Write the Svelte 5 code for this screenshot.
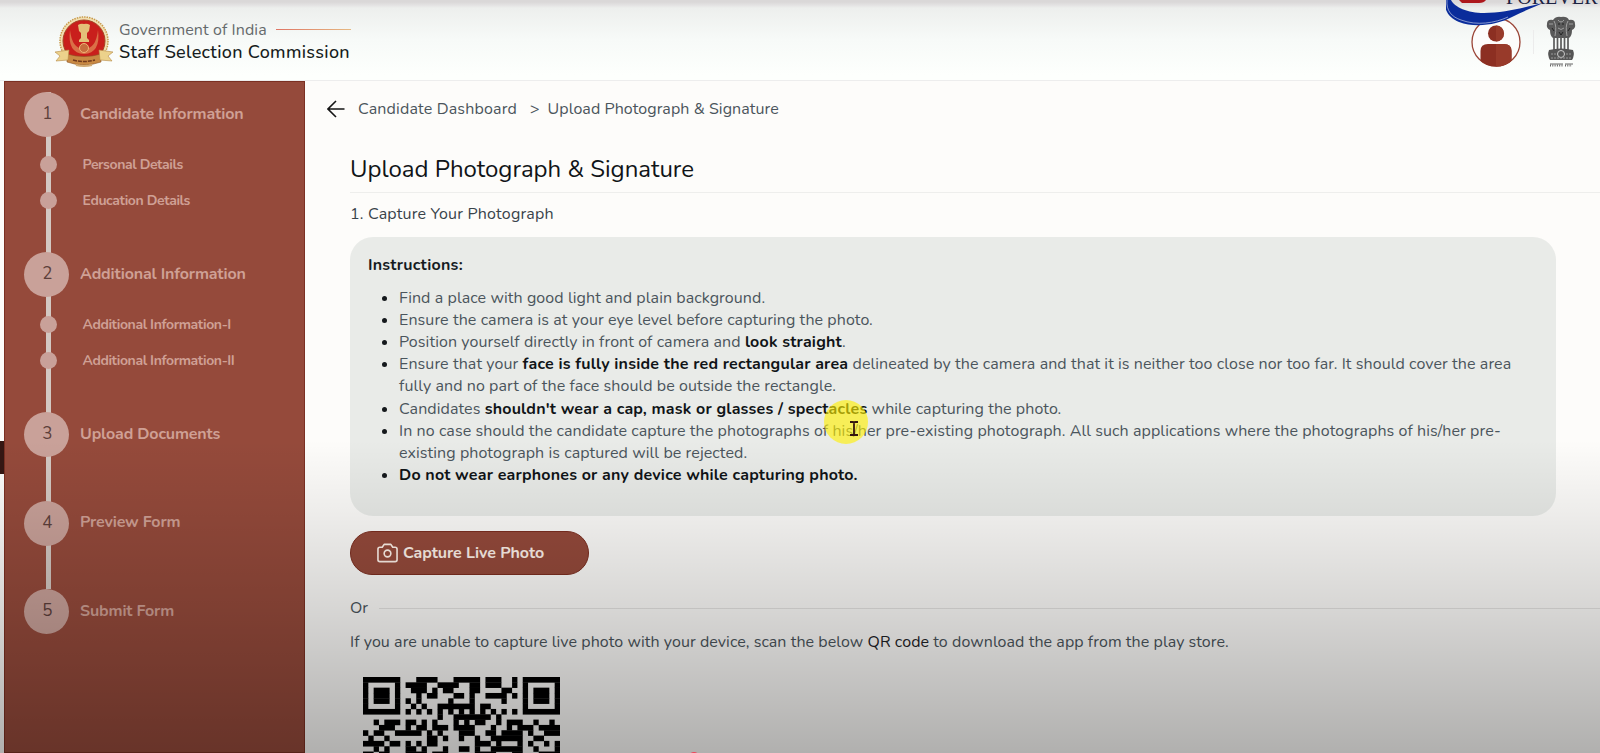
<script lang="ts">
  interface Step {
    label: string;
    children: string[];
  }

  const steps: Step[] = [
    { label: 'Candidate Information', children: ['Personal Details', 'Education Details'] },
    { label: 'Additional Information', children: ['Additional Information-I', 'Additional Information-II'] },
    { label: 'Upload Documents', children: [] },
    { label: 'Preview Form', children: [] },
    { label: 'Submit Form', children: [] }
  ];

  // dark modules of the code, as [first column, last column] runs per row
  const qrRows: number[][][] = [
    [[0, 6], [10, 13], [17, 21], [23, 25], [28, 28], [30, 36]],
    [[0, 0], [6, 6], [8, 11], [14, 17], [20, 21], [23, 25], [28, 28], [30, 30], [36, 36]],
    [[0, 0], [2, 4], [6, 6], [9, 11], [13, 13], [15, 16], [20, 21], [26, 27], [30, 30], [32, 34], [36, 36]],
    [[0, 0], [2, 4], [6, 6], [10, 10], [12, 13], [17, 18], [20, 20], [23, 26], [28, 28], [30, 30], [32, 34], [36, 36]],
    [[0, 0], [2, 4], [6, 6], [8, 8], [10, 10], [16, 16], [20, 20], [26, 26], [30, 30], [32, 34], [36, 36]],
    [[0, 0], [6, 6], [9, 9], [11, 11], [14, 20], [22, 23], [30, 30], [36, 36]],
    [[0, 6], [8, 8], [10, 10], [12, 12], [14, 14], [16, 16], [18, 18], [20, 20], [22, 22], [24, 24], [26, 26], [28, 28], [30, 36]],
    [[14, 14], [17, 23], [25, 25]],
    [[2, 2], [4, 6], [8, 9], [11, 11], [13, 13], [17, 17], [19, 19], [21, 22], [25, 25], [27, 29], [32, 32], [35, 35]],
    [[3, 5], [8, 8], [10, 11], [13, 15], [17, 20], [24, 24], [27, 27], [29, 31], [33, 36]],
    [[0, 0], [2, 3], [6, 10], [12, 12], [14, 14], [18, 20], [23, 24], [26, 29], [31, 31], [34, 36]],
    [[1, 1], [4, 4], [12, 13], [15, 15], [18, 18], [21, 21], [24, 29], [32, 33]],
    [[0, 3], [5, 6], [8, 8], [10, 10], [12, 13], [21, 23], [25, 25], [29, 29], [31, 31], [34, 34], [36, 36]],
    [[2, 2], [4, 4], [8, 9], [11, 11], [15, 15], [18, 19], [21, 21], [24, 29], [32, 32], [36, 36]],
    [[0, 1], [3, 4], [8, 11], [13, 15], [21, 24], [28, 29], [33, 36]]
  ];
</script>

<div class="page">
  <header>
    <svg class="crest" width="58" height="52" viewBox="0 0 58 52">
      <circle cx="29" cy="25" r="24" fill="#f1dfb0" stroke="#c89a4b" stroke-width="1.5" stroke-dasharray="1.5 1" />
      <circle cx="29" cy="25" r="21" fill="#c91f1c" stroke="#a54222" />
      <path d="M15 14 Q12 37 29 38 Q46 37 43 14 Q41 33 29 33 Q17 33 15 14Z" fill="#da7047" />
      <path d="M23 9 q3-2 6-1 q3-1 6 1 l-1 6 -2 2 v5 l2 2 v2 h-10 v-2 l2-2 v-5 l-2-2Z" fill="#e4c078" />
      <circle cx="29" cy="32" r="4.5" fill="#c76d3d" stroke="#edb776" />
      <path d="M12 38 Q29 43 46 38 V46 Q29 52 12 46Z" fill="#c88943" stroke="#8c5425" stroke-width=".6" />
      <path d="M14 34 L0 36 L5 40 L1 45 L13 44Z M44 34 L58 36 L53 40 L57 45 L45 44Z" fill="#ecd28b" stroke="#b58a46" stroke-width=".6" />
      <path d="M18 44 Q29 47 40 44" fill="none" stroke="#703a1c" stroke-width="1.5" stroke-dasharray="4 1" />
      <path d="M21 49 Q29 51 37 49" fill="none" stroke="#d2ac75" stroke-width="2" />
    </svg>
    <div class="brand">
      <div class="gov"><span>Government of India</span><i></i></div>
      <div class="ssc">Staff Selection Commission</div>
    </div>
    <div class="account">
      <svg width="50" height="50" viewBox="0 0 50 50">
        <defs>
          <clipPath id="avatar"><circle cx="25" cy="25" r="24.5" /></clipPath>
        </defs>
        <circle cx="25" cy="25" r="24" fill="#fdfcfb" stroke="#9b4537" stroke-width="1.3" />
        <g clip-path="url(#avatar)">
          <circle cx="25" cy="16.500" r="8" fill="#8c2f22" />
          <path d="M9.500 50 V34 Q9.500 27 17 27 H33 Q40.500 27 40.500 34 V50Z" fill="#8c2f22" />
          <path d="M25 8.500 a8 8 0 0 1 0 16Z M25 27 H33 Q40.500 27 40.500 34 V50 H25Z" fill="#983a2a" />
        </g>
      </svg>
      <span class="divider"></span>
      <svg width="30" height="52" viewBox="0 0 30 52">
        <path d="M7 4 Q10 0 15 1 Q21 0 23 4 Q29 3 29 8 Q30 12 26 14 Q26 20 23 22 H7 Q4 20 4 14 Q0 12 1 8 Q1 3 7 4Z" fill="#595959" />
        <path d="M8 5 Q11 10 9 20 M22 5 Q19 10 21 20 M12 4 Q15 8 18 4 M12 12 q3 3 6 0 M3 8 h4 M23 8 h4" fill="none" stroke="#a0a0a0" stroke-width="1" />
        <path d="M12 8 h2 M16 8 h2 M13 16 l2 3 2-3 M6 12 l2 3 M24 12 l-2 3" fill="none" stroke="#222" stroke-width="1" />
        <path d="M8 21 V34 M11.500 20 V34 M15 21 V34 M18.500 20 V34 M22 21 V34" stroke="#5b5b5b" stroke-width="1.700" />
        <path d="M3 34 Q15 31 27 34 Q29 39 26 44 H4 Q1 39 3 34Z" fill="#555" />
        <circle cx="15" cy="38" r="3.500" fill="none" stroke="#ccc" />
        <path d="M5 38 h5 M20 38 h5 M5 42 h20" stroke="#999" stroke-dasharray="2 1" />
        <path d="M4 48 H17 M19 48 H27" stroke="#666" stroke-width="1" />
        <path d="M4 49.500 H17 M19 49.500 H26" stroke="#666" stroke-width="2" stroke-dasharray="1 1.300" />
      </svg>
    </div>
  </header>

  <div class="body">
    <nav>
      {#each steps as step, i}
        <div class="step" class:has-children={step.children.length > 0}>
          <div class="step-head">
            <span class="number">{i + 1}</span>
            <span class="title">{step.label}</span>
          </div>
          {#if step.children.length > 0}
            <ul class="substeps">
              {#each step.children as child}
                <li><span class="dot"></span>{child}</li>
              {/each}
            </ul>
          {/if}
        </div>
      {/each}
    </nav>

    <main>
      <div class="breadcrumb">
        <svg width="18" height="18" viewBox="0 0 18 18">
          <path d="M17.500 9 H1.500 M9 1 L1 9 L9 17" fill="none" stroke="#151515" stroke-width="1.6" />
        </svg>
        <span class="crumb first">Candidate Dashboard</span>
        <span class="sep">&gt;</span>
        <span class="crumb">Upload Photograph &amp; Signature</span>
      </div>

      <section>
        <h1>Upload Photograph &amp; Signature</h1>
        <h2>1. Capture Your Photograph</h2>

        <div class="instructions">
          <h3>Instructions:</h3>
          <ul>
            <li>Find a place with good light and plain background.</li>
            <li>Ensure the camera is at your eye level before capturing the photo.</li>
            <li>Position yourself directly in front of camera and <b>look straight</b>.</li>
            <li>Ensure that your <b>face is fully inside the red rectangular area</b> delineated by the camera and that it is neither too close nor too far. It should cover the area<br />fully and no part of the face should be outside the rectangle.</li>
            <li>Candidates <b>shouldn't wear a cap, mask or glasses / spectacles</b> while capturing the photo.</li>
            <li>In no case should the candidate capture the photographs of his/her pre-existing photograph. All such applications where the photographs of his/her pre-<br />existing photograph is captured will be rejected.</li>
            <li><b>Do not wear earphones or any device while capturing photo.</b></li>
          </ul>
        </div>

        <button type="button">
          <svg width="21" height="20" viewBox="0 0 22 20">
            <path d="M3 4 H5.500 L7.500 1 H14.500 L16.500 4 H19 Q21 4 21 6 V17 Q21 19 19 19 H3 Q1 19 1 17 V6 Q1 4 3 4Z" fill="none" stroke="currentColor" stroke-width="1.7" stroke-linejoin="round" />
            <circle cx="11" cy="10.500" r="3.500" fill="none" stroke="currentColor" stroke-width="1.7" />
          </svg>
          <span>Capture Live Photo</span>
        </button>

        <div class="or"><span>Or</span><i></i></div>
        <p class="scan">If you are unable to capture live photo with your device, scan the below <em>QR code</em> to download the app from the play store.</p>

        <svg class="qr" width="197" height="197" viewBox="0 0 37 37">
          {#each qrRows as runs, y}
            {#each runs as [from, to]}
              <rect x={from} {y} width={to - from + 1} height="1.06" />
            {/each}
          {/each}
        </svg>
      </section>
    </main>
  </div>

  <div class="edge-tab"></div>
  <div class="shade"></div>
  <div class="red-dot"></div>

  <div class="pointer">
    <svg width="44" height="44" viewBox="0 0 44 44">
      <circle cx="22" cy="22" r="22" fill="#fff000" fill-opacity=".62" />
      <path d="M26 22 h3 l1 1 1-1 h3 M26 35 h3 l1-1 1 1 h3 M30 22.500 V35" fill="none" stroke="#35160f" stroke-width="1.800" />
    </svg>
  </div>

  <div class="watermark">
    <svg width="154" height="28" viewBox="0 0 154 28">
      <path d="M-1 0 C-2 12 4 18 13 22 C29 28 51 25 66 17 C78 11 88 7 97 3 C80 7 58 13 38 13 C22 13 8 7 5 0Z" fill="#0a2c9b" />
      <path d="M1 0 C0 11 6 17 15 20 C31 26 49 23 62 17" fill="none" stroke="#d9def0" stroke-width=".6" />
      <path d="M13 0 H40 Q38 3 33 3 H16Z" fill="#ad171c" />
    </svg>
    <span>FOREVER</span>
  </div>
</div>

<style>
  :global(body) {
    overflow: hidden;
  }

  .page {
    position: relative;
    width: 1600px;
    height: 753px;
    overflow: hidden;
    box-sizing: border-box;
    padding: 4px 0 0 4px;
    background: #fdfcfa;
    color: #4b555c;
    font-family: Nunito, 'Open Sans', 'Noto Sans', sans-serif;
    font-size: 16px;
    letter-spacing: 0.06px;
  }

  .page::before {
    content: '';
    position: absolute;
    inset: 0 0 auto 0;
    height: 81px;
    background: linear-gradient(#dad8d8 0 2px, #e3e2e2 5px, #edefed 8px, #f7faf8 40px, #fdfffd 75px);
    border-bottom: 1px solid #ededed;
    box-sizing: border-box;
  }

  header {
    position: relative;
    height: 77px;
    box-sizing: border-box;
    padding: 12px 24px 0 51px;
    display: flex;
    align-items: flex-start;
  }

  .brand {
    margin-left: 6px;
    padding-top: 3px;
  }

  .gov {
    display: flex;
    align-items: center;
    gap: 9px;
    height: 21px;
    color: #656a6c;
    letter-spacing: 0.1px;
  }

  .gov i {
    width: 75px;
    height: 1px;
    background: linear-gradient(90deg, #df7565, #e6b982);
  }

  .ssc {
    height: 24px;
    line-height: 25px;
    color: #161c20;
    font-size: 18px;
    font-weight: 500;
    letter-spacing: 0.32px;
  }

  .account {
    margin-left: auto;
    display: flex;
    align-items: center;
  }

  .divider {
    width: 1px;
    height: 24px;
    margin: 0 12px;
    background: #ececec;
  }

  .body {
    display: flex;
    height: 672px;
  }

  nav {
    width: 301px;
    flex: none;
    box-sizing: border-box;
    padding-top: 11px;
    background: #954a3b;
    outline: 1px solid #7b3023;
    outline-offset: -1px;
  }

  .step {
    height: 88.500px;
    background: linear-gradient(#d3c8c2, #d3c8c2) 41.500px 0 / 5px 100% no-repeat;
  }

  .step.has-children {
    height: 160px;
  }

  .step:last-child {
    background: none;
  }

  .step-head {
    display: flex;
    align-items: center;
    height: 45px;
    padding-left: 20px;
  }

  .number {
    width: 45px;
    height: 45px;
    border-radius: 50%;
    background: #c9a199;
    color: #5d3f3b;
    font-size: 17px;
    line-height: 43px;
    text-align: center;
    text-indent: 2px;
  }

  .title {
    margin: -2px 0 0 11px;
    color: #cfa095;
    font-size: 16px;
    font-weight: 700;
    letter-spacing: -0.15px;
  }

  .substeps {
    margin: 0;
    padding: 10px 0 0 35.500px;
    list-style: none;
  }

  .substeps li {
    display: flex;
    align-items: center;
    gap: 26px;
    height: 35.500px;
    color: #cfa095;
    font-size: 14px;
    font-weight: 700;
    letter-spacing: -0.4px;
  }

  .dot {
    width: 17px;
    height: 17px;
    border-radius: 50%;
    background: #c9a199;
  }

  main {
    flex: 1;
    min-width: 0;
  }

  .breadcrumb {
    display: flex;
    align-items: center;
    height: 56px;
    padding-left: 22px;
    white-space: nowrap;
  }

  .crumb.first {
    margin-left: 13px;
    letter-spacing: 0.16px;
  }

  .sep {
    margin: 0 8px 0 13px;
  }

  section {
    padding-left: 45px;
  }

  h1 {
    height: 56px;
    line-height: 65px;
    margin: 0 0 11px;
    box-sizing: border-box;
    border-bottom: 1px solid #eeeeec;
    color: #101417;
    font-size: 24px;
    font-weight: 400;
    letter-spacing: 0;
  }

  h2 {
    height: 21px;
    line-height: 21px;
    margin: 0 0 12px;
    color: #39434a;
    font-size: 16px;
    font-weight: 400;
    letter-spacing: 0.19px;
  }

  .instructions {
    width: 1206px;
    height: 279px;
    box-sizing: border-box;
    padding: 17px 18px 0;
    border-radius: 23px;
    background: #e9ebe8;
  }

  h3 {
    margin: 0;
    height: 22px;
    line-height: 22px;
    color: #161b1f;
    font-size: 16px;
    font-weight: 700;
    letter-spacing: 0.25px;
  }

  .instructions ul {
    margin: 10.500px 0 0;
    padding-left: 31px;
    line-height: 22.200px;
    letter-spacing: 0.08px;
    white-space: nowrap;
  }

  .instructions li::marker {
    color: #15191c;
  }

  b {
    color: #101417;
    font-weight: 700;
    letter-spacing: 0.2px;
  }

  button {
    display: flex;
    align-items: center;
    gap: 5px;
    width: 239px;
    height: 44px;
    margin: 15px 0 0;
    padding: 0 0 0 26px;
    border: 1px solid #7c2e20;
    border-radius: 22px;
    background: #954a3b;
    color: #fff2ea;
    font: inherit;
    font-weight: 700;
    letter-spacing: -0.05px;
  }

  .or {
    display: flex;
    align-items: center;
    gap: 11px;
    height: 22px;
    margin-top: 22px;
  }

  .or i {
    flex: 1;
    height: 1px;
    background: #e5e4e2;
  }

  .scan {
    height: 22px;
    line-height: 22px;
    margin: 12px 0 0;
    white-space: nowrap;
  }

  .scan em {
    color: #1d2226;
    font-style: normal;
  }

  .qr {
    display: block;
    margin: 24px 0 0 12.500px;
  }

  .edge-tab {
    position: absolute;
    left: 0;
    top: 441px;
    width: 4px;
    height: 33px;
    background: #351713;
  }

  .red-dot {
    position: absolute;
    left: 688px;
    top: 751.500px;
    width: 12px;
    height: 12px;
    border-radius: 50%;
    background: #f04458;
  }

  .shade {
    position: absolute;
    inset: 440px 0 0 0;
    background: linear-gradient(rgba(0, 0, 0, 0), rgba(0, 0, 0, 0.06) 22%, rgba(0, 0, 0, 0.15) 53%, rgba(0, 0, 0, 0.3));
    pointer-events: none;
  }

  .pointer {
    position: absolute;
    left: 824px;
    top: 400px;
  }

  .watermark {
    position: absolute;
    left: 1446px;
    top: 0;
    width: 154px;
    height: 28px;
    overflow: hidden;
  }

  .watermark span {
    position: absolute;
    left: 60px;
    top: -16px;
    color: #1c2342;
    font-family: 'Liberation Serif', serif;
    font-size: 20px;
    line-height: 26px;
  }
</style>
